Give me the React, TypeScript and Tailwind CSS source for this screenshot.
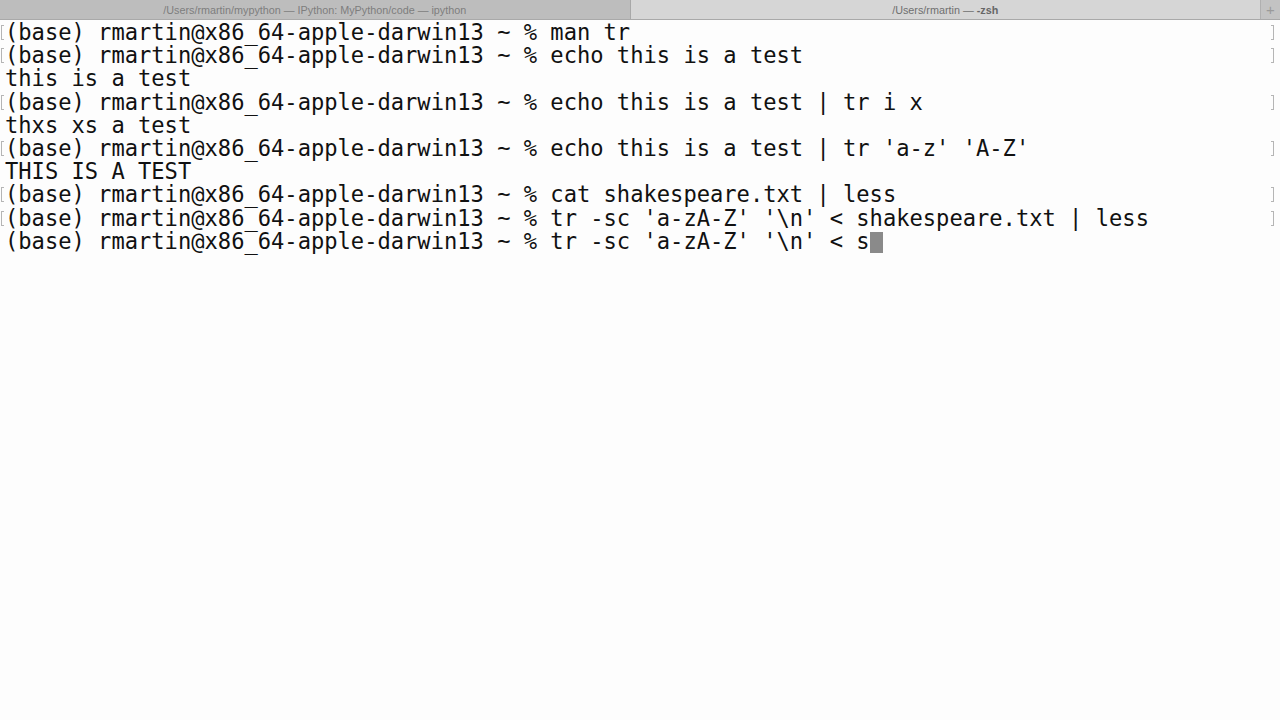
import React from "react";

type Line = { text: string; prompt?: boolean; cursor?: boolean };

const PROMPT = "(base) rmartin@x86_64-apple-darwin13 ~ % ";

const lines: Line[] = [
  { text: PROMPT + "man tr", prompt: true },
  { text: PROMPT + "echo this is a test", prompt: true },
  { text: "this is a test" },
  { text: PROMPT + "echo this is a test | tr i x", prompt: true },
  { text: "thxs xs a test" },
  { text: PROMPT + "echo this is a test | tr 'a-z' 'A-Z'", prompt: true },
  { text: "THIS IS A TEST" },
  { text: PROMPT + "cat shakespeare.txt | less", prompt: true },
  { text: PROMPT + "tr -sc 'a-zA-Z' '\\n' < shakespeare.txt | less", prompt: true },
  { text: PROMPT + "tr -sc 'a-zA-Z' '\\n' < s", cursor: true },
];

function TabBar() {
  return (
    <div className="flex h-5 w-full text-[10.8px] leading-5 font-['Liberation_Sans',Arial,sans-serif] border-b border-[#a9a9a9]">
      <div className="flex-1 bg-[#bdbdbd] text-[#7d7d7d] text-center truncate border-r border-[#a8a8a8]">
        /Users/rmartin/mypython — IPython: MyPython/code — ipython
      </div>
      <div className="flex-1 bg-[#d6d6d6] text-[#6f6f6f] text-center truncate">
        /Users/rmartin — <span className="font-bold text-[#666]">-zsh</span>
      </div>
      <div className="w-5 bg-[#c3c3c3] text-[#9a9a9a] text-center text-[15px] leading-5 border-l border-[#b0b0b0]">
        +
      </div>
    </div>
  );
}

function Mark({ side }: { side: "left" | "right" }) {
  return (
    <span
      className={
        side === "left"
          ? "block w-[3px] h-[15px] border-l border-t border-b border-[#b5b5b5]"
          : "block w-[3px] h-[15px] border-r border-t border-b border-[#b5b5b5]"
      }
    />
  );
}

export default function App() {
  return (
    <div className="w-[1280px] h-[720px] bg-[#fdfdfd] overflow-hidden flex flex-col">
      <TabBar />
      <div className="flex flex-col pt-[1px] font-['DejaVu_Sans_Mono',monospace] text-[22.1px] text-[#111]">
        {lines.map((l, i) => (
          <div key={i} className="flex items-center h-[23.2px]">
            <div className="w-[5px] pl-[1px] flex items-center">
              {l.prompt && <Mark side="left" />}
            </div>
            <div className="flex-1 whitespace-pre leading-[23.2px] h-[23.2px]">
              {l.text}
              {l.cursor && <span className="inline-block w-[13px] h-[21px] bg-[#8a8a8a] align-[-4px]" />}
            </div>
            <div className="w-[9px] flex items-center">
              {l.prompt && <Mark side="right" />}
            </div>
          </div>
        ))}
      </div>
    </div>
  );
}
